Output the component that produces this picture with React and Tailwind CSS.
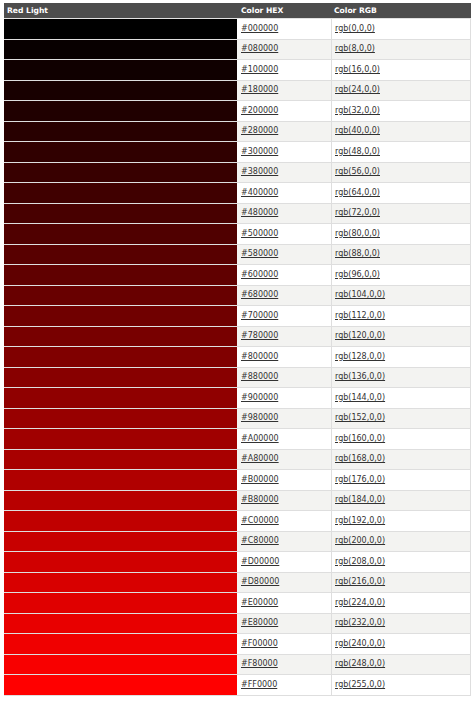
const rows = Array.from({ length: 33 }, (_, i) => {
  const r = i === 32 ? 255 : i * 8;
  return {
    r,
    hex: '#' + r.toString(16).toUpperCase().padStart(2, '0') + '0000',
    rgb: `rgb(${r},0,0)`,
  };
});

export default function App() {
  return (
    <div className="min-h-screen bg-white pt-[3px] pl-[4px] font-['DejaVu_Sans',Verdana,sans-serif] text-[8px] text-[#333]">
      <div className="w-[467px]">
        <div className="grid grid-cols-[233px_94px_140px] h-[15px] items-center bg-[#4d4d4d] text-white font-bold text-[7.6px]">
          <div className="pl-[3px]">Red Light</div>
          <div className="pl-[4px]">Color HEX</div>
          <div className="pl-[3px]">Color RGB</div>
        </div>
        <div className="h-[1px] bg-[#e2e2e2]" />
        {rows.map((row, i) => (
          <div
            key={row.hex}
            className={`grid grid-cols-[233px_94px_140px] h-[20.5px] border-b border-[#dedede] ${
              i % 2 === 1 ? 'bg-[#f3f3f1]' : 'bg-white'
            }`}
          >
            <div className="h-full" style={{ backgroundColor: row.rgb }} />
            <div className="flex items-center pl-[4px]">
              <span className="underline">{row.hex}</span>
            </div>
            <div className="flex items-center pl-[3px] border-l border-r border-[#dedede]">
              <span className="underline">{row.rgb}</span>
            </div>
          </div>
        ))}
      </div>
    </div>
  );
}
